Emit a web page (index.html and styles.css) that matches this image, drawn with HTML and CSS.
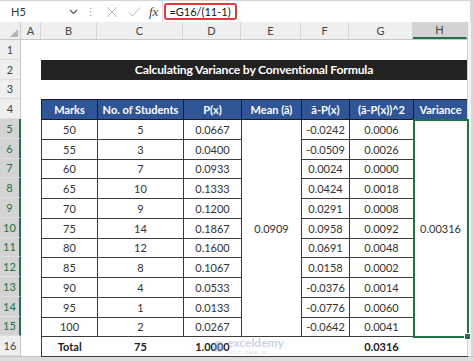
FILE: index.html
```html
<!DOCTYPE html>
<html lang="en">
<head>
    <meta charset="UTF-8">
    <title>Calculating Variance</title>
    <link rel="stylesheet" href="styles.css">
</head>
<body>
    <div class="formula-bar">
        <div class="name-box">
            <span>H5</span>
            <svg class="chev" width="9" height="6" viewBox="0 0 9 6"><path d="M1 1 L4.5 4.5 L8 1" fill="none" stroke="#555" stroke-width="1.2"/></svg>
        </div>
        <span class="dots">⋮</span>
        <svg class="ico" width="12" height="12" viewBox="0 0 12 12"><path d="M1 1 L11 11 M11 1 L1 11" stroke="#b8b8b8" stroke-width="1"/></svg>
        <svg class="ico" width="13" height="12" viewBox="0 0 13 12"><path d="M1 6.5 L4.5 10 L12 1.5" fill="none" stroke="#b8b8b8" stroke-width="1"/></svg>
        <span class="fx">fx</span>
        <div class="formula">
            <span class="formula-text">=G16/(11-1)</span>
        </div>
    </div>

    <div class="sheet">
        <div class="row-heads">
            <div class="corner"></div>
            <div class="rh">1</div>
            <div class="rh">2</div>
            <div class="rh">3</div>
            <div class="rh">4</div>
            <div class="rh sel">5</div>
            <div class="rh sel">6</div>
            <div class="rh sel">7</div>
            <div class="rh sel">8</div>
            <div class="rh sel">9</div>
            <div class="rh sel">10</div>
            <div class="rh sel">11</div>
            <div class="rh sel">12</div>
            <div class="rh sel">13</div>
            <div class="rh sel">14</div>
            <div class="rh sel">15</div>
            <div class="rh">16</div>
        </div>

        <div class="cells">
            <div class="col-heads">
                <div class="ch w-a">A</div>
                <div class="ch w-b">B</div>
                <div class="ch w-c">C</div>
                <div class="ch w-d">D</div>
                <div class="ch w-e">E</div>
                <div class="ch w-f">F</div>
                <div class="ch w-g">G</div>
                <div class="ch w-h sel">H</div>
            </div>

            <div class="body">
                <div class="title">Calculating Variance by Conventional Formula</div>

                <table class="data">
                    <colgroup>
                        <col class="w-b"><col class="w-c"><col class="w-d"><col class="w-e"><col class="w-f"><col class="w-g"><col class="w-h">
                    </colgroup>
                    <thead>
                        <tr>
                            <th>Marks</th>
                            <th>No. of Students</th>
                            <th>P(x)</th>
                            <th>Mean (ā)</th>
                            <th>ā-P(x)</th>
                            <th>(ā-P(x))^2</th>
                            <th>Variance</th>
                        </tr>
                    </thead>
                    <tbody>
                        <tr><td>50</td><td>5</td><td>0.0667</td><td rowspan="11">0.0909</td><td>-0.0242</td><td>0.0006</td><td rowspan="11" class="selected">0.00316</td></tr>
                        <tr><td>55</td><td>3</td><td>0.0400</td><td>-0.0509</td><td>0.0026</td></tr>
                        <tr><td>60</td><td>7</td><td>0.0933</td><td>0.0024</td><td>0.0000</td></tr>
                        <tr><td>65</td><td>10</td><td>0.1333</td><td>0.0424</td><td>0.0018</td></tr>
                        <tr><td>70</td><td>9</td><td>0.1200</td><td>0.0291</td><td>0.0008</td></tr>
                        <tr><td>75</td><td>14</td><td>0.1867</td><td>0.0958</td><td>0.0092</td></tr>
                        <tr><td>80</td><td>12</td><td>0.1600</td><td>0.0691</td><td>0.0048</td></tr>
                        <tr><td>85</td><td>8</td><td>0.1067</td><td>0.0158</td><td>0.0002</td></tr>
                        <tr><td>90</td><td>4</td><td>0.0533</td><td>-0.0376</td><td>0.0014</td></tr>
                        <tr><td>95</td><td>1</td><td>0.0133</td><td>-0.0776</td><td>0.0060</td></tr>
                        <tr><td>100</td><td>2</td><td>0.0267</td><td>-0.0642</td><td>0.0041</td></tr>
                    </tbody>
                    <tfoot>
                        <tr class="total">
                            <td>Total</td><td>75</td><td>1.0000</td><td></td><td></td><td>0.0316</td><td></td>
                        </tr>
                    </tfoot>
                </table>

                <div class="watermark">
                    <span class="wm-logo"></span>
                    <span class="wm-text"><span class="wm-name">exceldemy</span><small>EXCEL · DATA · BI</small></span>
                </div>
            </div>
        </div>

        <div class="scroll"></div>
    </div>
    <div class="bottom"></div>
</body>
</html>
```

FILE: styles.css
```css
* {
    box-sizing: border-box;
}
body {
    margin: 0;
    width: 474px;
    height: 361px;
    overflow: hidden;
    background: #fff;
    font-family: Lato, "Liberation Sans", sans-serif;
    color: #333;
}

/* formula bar */
.formula-bar {
    height: 22px;
    display: flex;
    align-items: center;
    border-top: 1px solid #d6d6d6;
    border-right: 4px solid #d8d8d8;
    font-size: 11px;
}
.name-box {
    width: 84px;
    height: 100%;
    display: flex;
    align-items: center;
    justify-content: space-between;
    padding: 0 6px 0 11px;
    color: #333;
}
.dots {
    width: 12px;
    color: #999;
    font-size: 11px;
    text-align: center;
}
.ico {
    margin-left: 10px;
}
.fx {
    margin-left: 8px;
    font-family: "Liberation Serif", serif;
    font-style: italic;
    font-size: 13px;
    color: #444;
}
.formula {
    flex: 1;
    height: 100%;
    margin-left: 4px;
    border-left: 1px solid #dcdcdc;
    display: flex;
    align-items: center;
    padding-left: 1px;
}
.formula-text {
    border: 2px solid #e0393e;
    border-radius: 3px;
    padding: 0 4px 0 3px;
    height: 17px;
    line-height: 13px;
    font-size: 11px;
    color: #111;
}

/* sheet */
.sheet {
    display: flex;
    height: 334px;
}
.row-heads {
    width: 21px;
    display: flex;
    flex-direction: column;
    background: #efefef;
    border-right: 1px solid #c8c8c8;
}
.corner {
    height: 18px;
    border-bottom: 1px solid #c8c8c8;
    position: relative;
}
.corner::after {
    content: "";
    position: absolute;
    right: 2px;
    bottom: 2px;
    border-style: solid;
    border-width: 0 0 8px 8px;
    border-color: transparent transparent #b5b5b5 transparent;
}
.rh {
    height: 19.75px;
    display: flex;
    align-items: center;
    justify-content: center;
    font-size: 11px;
    color: #444;
    border-bottom: 1px solid #dedede;
}
.rh.sel {
    background: #d3d3d3;
    color: #217346;
    border-right: 2px solid #217346;
    margin-right: -1px;
}

.cells {
    width: 446px;
}
.col-heads {
    height: 18px;
    display: flex;
    background: #efefef;
    border-bottom: 1px solid #c8c8c8;
}
.ch {
    display: flex;
    align-items: center;
    justify-content: center;
    font-size: 11px;
    color: #444;
    border-right: 1px solid #d6d6d6;
}
.ch.sel {
    background: #d3d3d3;
    border-bottom: 2px solid #217346;
}
.w-a { width: 20px; }
.w-b { width: 56px; }
.w-c { width: 86px; }
.w-d { width: 58px; }
.w-e { width: 60px; }
.w-f { width: 48px; }
.w-g { width: 64px; }
.w-h { width: 54px; }

.body {
    display: grid;
    grid-template-columns: 20px 426px;
    grid-template-rows: repeat(16, 19.75px);
}
.title {
    grid-column: 2;
    grid-row: 2;
    background: #222;
    color: #fff;
    font-weight: bold;
    font-size: 12.2px;
    letter-spacing: -0.2px;
    display: flex;
    align-items: center;
    justify-content: center;
}

.data {
    grid-column: 2;
    grid-row: 4 / 17;
    width: 426px;
    height: 256.75px;
    table-layout: fixed;
    border-collapse: collapse;
    font-size: 11px;
}
.data th,
.data td {
    padding: 0;
    text-align: center;
    border: 1px solid #3c3c3c;
    height: 19.75px;
}
.data th {
    background: #2f5597;
    color: #fff;
    font-weight: bold;
    border-color: #1b1b1b;
}
.data td {
    color: #333;
}
.data td.selected {
    position: relative;
    outline: 2px solid #217346;
    outline-offset: -1px;
}
.data td.selected::after {
    content: "";
    position: absolute;
    right: -4px;
    bottom: -4px;
    width: 5px;
    height: 5px;
    background: #217346;
    border: 1px solid #fff;
}
.total td {
    font-weight: bold;
    color: #222;
    border-left: none;
    border-right: none;
}
.total td:first-child {
    border-left: 1px solid #3c3c3c;
}
.total td:last-child {
    border-right: 1px solid #3c3c3c;
}

.watermark {
    grid-column: 2;
    grid-row: 16;
    margin-left: 172px;
    display: flex;
    align-items: center;
    gap: 3px;
    opacity: 0.4;
    z-index: 1;
}
.wm-logo {
    width: 11px;
    height: 11px;
    border-radius: 50%;
    background: #8fa6cc;
}
.wm-text {
    display: flex;
    flex-direction: column;
    color: #7b93c0;
}
.wm-name {
    font-weight: bold;
    font-size: 12px;
    line-height: 11px;
}
.wm-text small {
    margin-top: 3px;
    font-size: 4px;
    line-height: 4px;
    letter-spacing: 0.5px;
}

.scroll {
    flex: 1;
    background: #f4f4f4;
    border-left: 1px solid #d0d0d0;
    border-right: 3px solid #d8d8d8;
}
.bottom {
    height: 5px;
    background: #dcdcdc;
    border-top: 1px solid #c4c4c4;
}
```
